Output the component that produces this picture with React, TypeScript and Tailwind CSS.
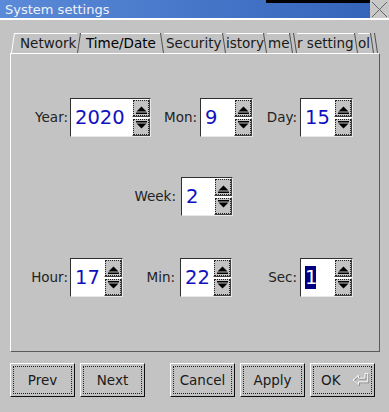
import React from "react";

const FONT = "[font-family:'DejaVu_Sans',sans-serif]";

function Slash({ dir, color = "#505050" }: { dir: "/" | "\\"; color?: string }) {
  return (
    <svg width="4" height="20" className="shrink-0 block">
      {dir === "/" ? (
        <line x1="0.5" y1="20" x2="3.5" y2="0" stroke={color} strokeWidth="1" />
      ) : (
        <line x1="0.5" y1="0" x2="3.5" y2="20" stroke={color} strokeWidth="1" />
      )}
    </svg>
  );
}

function Tab({ label, w, pl = 0, sel = false }: { label: string; w: number; pl?: number; sel?: boolean }) {
  return (
    <div
      className={`shrink-0 h-[20px] whitespace-nowrap border-t border-white text-[13.5px] leading-[19px] text-[#1a1a1a] ${sel ? "text-black" : ""}`}
      style={{ width: w, paddingLeft: pl }}
    >
      {label}
    </div>
  );
}

function Arrow({ up }: { up?: boolean }) {
  return (
    <svg width="11" height="8" viewBox="0 0 11 8" className="block">
      {up ? (
        <>
          <polygon points="0.5,5.5 5.5,0.5 10.5,5.5" fill="#000" />
          <rect x="0" y="6.5" width="11" height="1.5" fill="#000" />
        </>
      ) : (
        <>
          <rect x="0" y="0" width="11" height="1.5" fill="#000" />
          <polygon points="0.5,2.5 5.5,7.5 10.5,2.5" fill="#000" />
        </>
      )}
    </svg>
  );
}

function SpinBtn({ up }: { up?: boolean }) {
  return (
    <div className="flex-1 bg-[#c3c3c3] border border-t-white border-l-white border-b-[#404040] border-r-[#404040]">
      <div className={`h-full border border-dotted border-[#202020] flex justify-center ${up ? "items-end pb-[1px]" : "items-start pt-[1px]"}`}>
        <Arrow up={up} />
      </div>
    </div>
  );
}

function Field({ value, w = 53, selected = false }: { value: string; w?: number; selected?: boolean }) {
  return (
    <div
      className="shrink-0 flex h-[39px] bg-white border border-t-[#303030] border-l-[#303030] border-b-[#e8e8e8] border-r-[#e8e8e8]"
      style={{ width: w }}
    >
      <div className="flex-1 flex items-center pl-[4px] text-[19.5px] text-[#1010c0]">
        {selected ? (
          <span className="inline-block w-[11px] h-[23px] leading-[23px] text-center bg-[#000080] text-white">{value}</span>
        ) : (
          <span>{value}</span>
        )}
      </div>
      <div className="w-[18px] flex flex-col gap-[1px]">
        <SpinBtn up />
        <SpinBtn />
      </div>
    </div>
  );
}

function Label({ text, w, pr }: { text: string; w: number; pr: number }) {
  return (
    <div className="shrink-0 text-right text-[13.5px] text-[#222]" style={{ width: w, paddingRight: pr }}>
      {text}
    </div>
  );
}

function Btn({ children, ml = 0, left = false }: { children: React.ReactNode; ml?: number; left?: boolean }) {
  return (
    <div
      className="shrink-0 w-[65px] h-[34px] bg-[#c3c3c3] border border-t-white border-l-white border-b-[#101010] border-r-[#101010] p-[2px]"
      style={{ marginLeft: ml }}
    >
      <div className={`h-full border border-dotted border-[#202020] flex items-center ${left ? "justify-start pl-[7px] gap-[12px]" : "justify-center"} text-[13.5px] text-[#1a1a1a]`}>
        {children}
      </div>
    </div>
  );
}

function ReturnIcon() {
  return (
    <svg width="20" height="14" viewBox="0 0 20 14" className="block">
      <polygon points="2,8 8,3 8,6 15,6 15,1 18,1 18,10 8,10 8,13" fill="none" stroke="#808080" strokeWidth="1" />
      <polygon points="1,7 7,2 7,5 14,5 14,0 17,0 17,9 7,9 7,12" fill="none" stroke="#ffffff" strokeWidth="1" />
    </svg>
  );
}

export default function App() {
  return (
    <div className={`w-[389px] h-[412px] bg-[#c3c3c3] flex flex-col overflow-hidden ${FONT}`}>
      {/* Title bar */}
      <div className="h-[18px] flex shrink-0">
        <div className="flex-1 flex flex-col bg-gradient-to-r from-[#5b8ad8] to-[#3565bb]">
          <div className="h-[3px] flex justify-end">
            <div className="w-[104px] bg-black" />
          </div>
          <div className="pl-[5px] text-[13px] leading-[13px] text-[#eef2fa]">System settings</div>
        </div>
        <div className="w-[19px] bg-[#c8c8c8] flex items-center justify-center">
          <svg width="17" height="17" viewBox="0 0 17 17">
            <line x1="1" y1="1" x2="16" y2="16" stroke="#666" strokeWidth="1" />
            <line x1="16" y1="1" x2="1" y2="16" stroke="#666" strokeWidth="1" />
          </svg>
        </div>
      </div>
      <div className="h-[2px] bg-white shrink-0" />

      {/* Tabs */}
      <div className="mt-[13px] h-[20px] pl-[11px] flex shrink-0">
        <Slash dir="/" color="#ffffff" />
        <Tab label="Network" w={62} pl={5} />
        <Slash dir="/" />
        <Tab label="Time/Date" w={79} pl={5} sel />
        <Slash dir="\" />
        <Tab label="Security" w={58} pl={2} />
        <Slash dir="\" />
        <Tab label="istory" w={37} pl={0} />
        <Slash dir="\" />
        <Tab label="me" w={22} pl={1} />
        <Slash dir="\" />
        <Slash dir="\" />
        <Tab label="r setting" w={57} pl={0} />
        <Slash dir="\" />
        <Tab label="ol" w={12} pl={0} />
        <Slash dir="\" />
        <Slash dir="\" />
      </div>

      {/* Panel */}
      <div className="ml-[10px] w-[370px] h-[299px] shrink-0 border border-t-white border-l-white border-b-[#5a5a5a] border-r-[#5a5a5a] flex flex-col">
        <div className="mt-[44px] flex items-center">
          <Label text="Year:" w={59} pr={2} />
          <Field value="2020" w={81} />
          <Label text="Mon:" w={49} pr={3} />
          <Field value="9" />
          <Label text="Day:" w={47} pr={3} />
          <Field value="15" />
        </div>
        <div className="mt-[40px] flex items-center">
          <Label text="Week:" w={170} pr={5} />
          <Field value="2" w={52} />
        </div>
        <div className="mt-[42px] flex items-center">
          <Label text="Hour:" w={59} pr={2} />
          <Field value="17" />
          <Label text="Min:" w={57} pr={5} />
          <Field value="22" w={52} />
          <Label text="Sec:" w={68} pr={3} />
          <Field value="1" selected />
        </div>
      </div>

      {/* Buttons */}
      <div className="mt-[11px] pl-[10px] flex">
        <Btn>Prev</Btn>
        <Btn ml={5}>Next</Btn>
        <Btn ml={25}>Cancel</Btn>
        <Btn ml={5}>Apply</Btn>
        <Btn ml={5} left>
          <span>OK</span>
          <ReturnIcon />
        </Btn>
      </div>
    </div>
  );
}
